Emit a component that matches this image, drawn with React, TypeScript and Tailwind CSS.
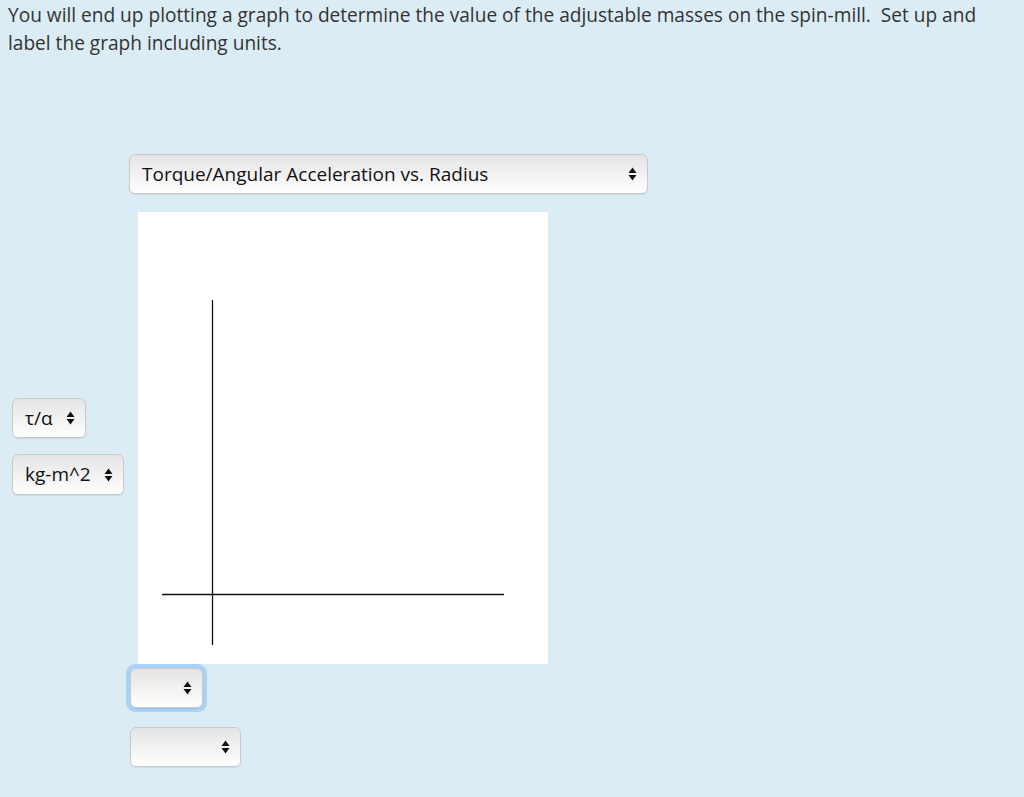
import React from "react";

function Arrows() {
  return (
    <svg width="9" height="14" viewBox="0 0 9 14" aria-hidden="true" className="shrink-0">
      <path d="M4.5 0.5 L8.5 6 L0.5 6 Z" fill="#111" />
      <path d="M4.5 13.5 L8.5 8 L0.5 8 Z" fill="#111" />
    </svg>
  );
}

interface SelectBoxProps {
  label?: string;
  className?: string;
}

function SelectBox({ label, className = "" }: SelectBoxProps) {
  return (
    <div
      className={`flex items-center justify-between rounded-[6px] border border-[#c9c9c9] bg-gradient-to-b from-[#e4e4e4] to-white pl-3 pr-[10px] shadow-[0_1px_1px_rgba(0,0,0,0.08)] text-[19px] text-[#111] ${className}`}
    >
      <span className="whitespace-nowrap">{label ?? ""}</span>
      <Arrows />
    </div>
  );
}

export default function App() {
  return (
    <div
      className="min-h-[797px] w-[1024px] bg-[#dbecf5] text-[#333]"
      style={{ fontFamily: '"Open Sans", "Liberation Sans", sans-serif' }}
    >
      <p className="pl-2 pr-[20px] pt-[1px] text-[19.1px] leading-[28px]">
        You will end up plotting a graph to determine the value of the adjustable masses on the spin-mill.&nbsp; Set up and label the graph including units.
      </p>

      <div className="mt-[97px] flex">
        {/* axis label pickers */}
        <div className="flex w-[128px] flex-col gap-[16px] pl-3 pt-[244px]">
          <SelectBox label="τ/α" className="h-[40px] w-[74px]" />
          <SelectBox label="kg-m^2" className="h-[41px] w-[112px] pr-[7px]" />
        </div>

        <div className="flex flex-col">
          <SelectBox
            label="Torque/Angular Acceleration vs. Radius"
            className="ml-[1px] h-[40px] w-[519px]"
          />

          {/* empty plot */}
          <div className="ml-[10px] mt-[18px] h-[452px] w-[410px] bg-white">
            <svg width="410" height="452" aria-hidden="true">
              <line x1="74.5" y1="88" x2="74.5" y2="433" stroke="#111" strokeWidth="1.3" />
              <line x1="24" y1="382.5" x2="366" y2="382.5" stroke="#111" strokeWidth="1.3" />
            </svg>
          </div>

          <div className="-ml-[2px] w-fit rounded-[9px] bg-[#a9d2f7] p-[4px]">
            <SelectBox className="h-[40px] w-[73px]" />
          </div>
          <SelectBox className="ml-[2px] mt-[15px] h-[40px] w-[111px]" />
        </div>
      </div>
    </div>
  );
}
